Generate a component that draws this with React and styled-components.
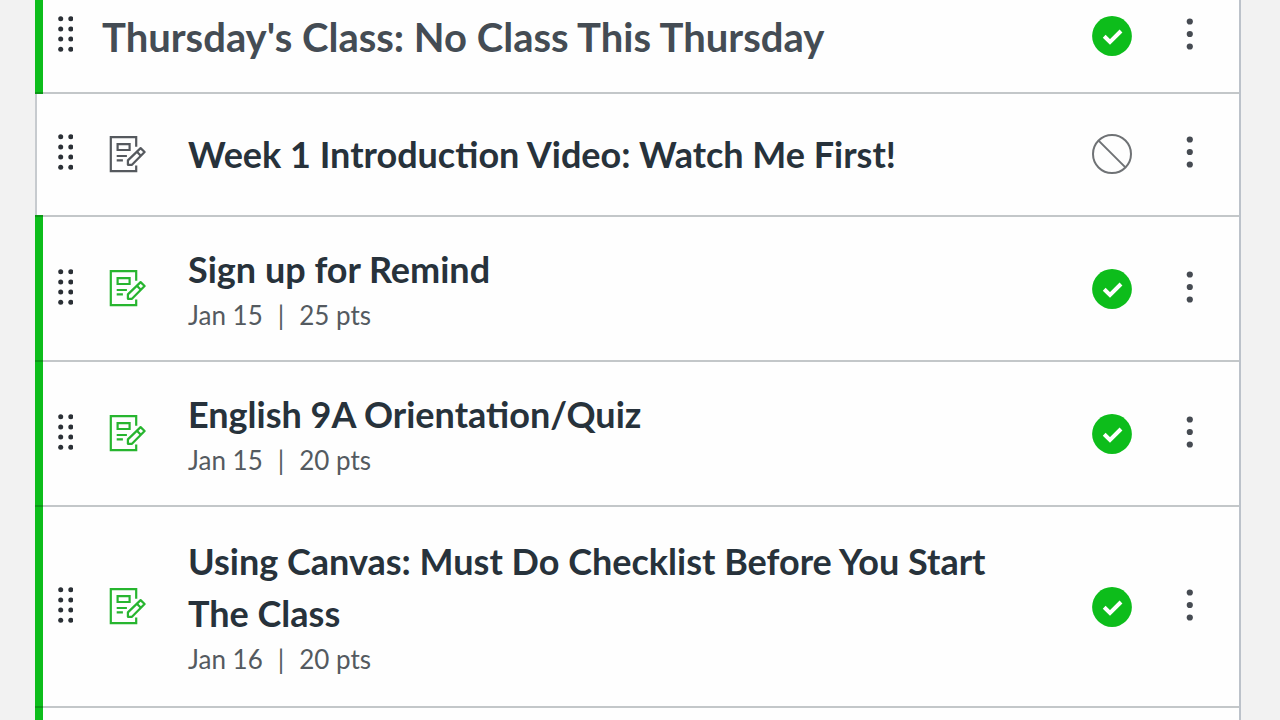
import React from 'react';
import styled, { createGlobalStyle } from 'styled-components';

const GlobalStyle = createGlobalStyle`
  * {
    box-sizing: border-box;
  }

  body {
    margin: 0;
    background: #f2f2f2;
    font-family: Lato, "Liberation Sans", sans-serif;
    overflow: hidden;
  }
`;

const Panel = styled.ul`
  list-style: none;
  margin: 0 39px 0 35px;
  padding: 0;
  background: #fefefe;
  border-left: 2px solid #c7cbcf;
  border-right: 2px solid #bcc2ca;
`;

const rowPadding = {
  header: '9px 45px 29px 21px',
  single: '34px 45px 35px 21px',
  double: '26px 45px 26px 21px',
  tall: '28px 45px 28px 21px',
};

const Row = styled.li`
  position: relative;
  display: flex;
  align-items: center;
  padding: ${({ $size }) => rowPadding[$size || 'double']};
  border-bottom: 2px solid #c3c7c9;

  &::before {
    content: '';
    display: ${({ $published }) => ($published ? 'block' : 'none')};
    position: absolute;
    top: -2px;
    bottom: -2px;
    left: -2px;
    width: 8px;
    background: #0dbd1b;
    border-top: 2px solid #0b9716;
    border-bottom: 2px solid #0b9716;
  }
`;

const IconButton = styled.button`
  display: flex;
  flex: none;
  padding: 0;
  border: none;
  background: none;
  color: ${({ $color }) => $color || '#2b3036'};
  cursor: pointer;
`;

const HandleButton = styled(IconButton)`
  padding-bottom: 4px;
  cursor: move;
`;

const MenuButton = styled(IconButton)`
  margin-left: 54px;
  padding-bottom: 4px;
`;

const TypeIcon = styled.span`
  display: flex;
  flex: none;
  margin-left: 36px;
  color: ${({ $published }) => ($published ? '#27b52f' : '#55595e')};
`;

const Content = styled.div`
  flex: 1;
  min-width: 0;
  margin: 0 60px 0 42px;
`;

const HeaderTitle = styled.h2`
  flex: 1;
  margin: 0 60px 0 29px;
  padding-top: 2px;
  color: #444c54;
  font-size: 40px;
  font-weight: 700;
  line-height: 52px;
`;

const Title = styled.a`
  display: block;
  color: #27323b;
  font-size: 36px;
  font-weight: 700;
  line-height: 52px;
  text-decoration: none;
`;

const Meta = styled.div`
  display: flex;
  margin-top: 1px;
  color: #545a60;
  font-size: 26px;
  line-height: 38px;
`;

const Detail = styled.span`
  & + &::before {
    content: '|';
    margin: 0 15px;
  }
`;

const items = [
  { title: 'Week 1 Introduction Video: Watch Me First!', published: false, size: 'single' },
  { title: 'Sign up for Remind', due: 'Jan 15', points: '25 pts', published: true },
  { title: 'English 9A Orientation/Quiz', due: 'Jan 15', points: '20 pts', published: true },
  {
    title: 'Using Canvas: Must Do Checklist Before You Start The Class',
    due: 'Jan 16',
    points: '20 pts',
    published: true,
    size: 'tall',
  },
];

const DragHandle = () => (
  <HandleButton type="button" aria-label="Move item">
    <svg width="15" height="36" viewBox="0 0 15 36" fill="currentColor">
      {[2.7, 12.8].map((x) =>
        [2.8, 13, 23.1, 33.2].map((y) => <circle key={`${x}-${y}`} cx={x} cy={y} r="2.5" />)
      )}
    </svg>
  </HandleButton>
);

const OptionsMenu = () => (
  <MenuButton type="button" aria-label="Options" $color="#464b52">
    <svg width="8" height="32" viewBox="0 0 8 32" fill="currentColor">
      <circle cx="3.8" cy="3.5" r="3.1" />
      <circle cx="3.8" cy="16" r="3.1" />
      <circle cx="3.8" cy="28.5" r="3.1" />
    </svg>
  </MenuButton>
);

const AssignmentIcon = () => (
  <svg width="37" height="37" viewBox="0 0 37 37" fill="none" stroke="currentColor" strokeWidth="2.2">
    <path d="M27.2 10.8V1.2H1.8v33.9h25.4v-5.7" />
    <path d="M8.6 8.2h12v5.8h-12z" />
    <path d="M7.7 20h10.2M7.7 24.4h6.2" />
    <path d="M18.9 28.8v-4.4L31.6 12.1l4 3.9L23 28.8z" strokeLinejoin="round" />
    <path d="M27.9 15.8l3.9 4" />
  </svg>
);

const PublishButton = ({ published }) => (
  <IconButton
    type="button"
    aria-label={published ? 'Published' : 'Unpublished'}
    $color={published ? '#0dbd1b' : '#6f7275'}
  >
    {published ? (
      <svg width="40" height="40" viewBox="0 0 40 40">
        <circle cx="20" cy="20" r="19.9" fill="currentColor" />
        <path d="M12.2 20.2l5.8 5.7L29 15" fill="none" stroke="#fff" strokeWidth="4" />
      </svg>
    ) : (
      <svg width="40" height="40" viewBox="0 0 40 40" fill="none" stroke="currentColor" strokeWidth="2">
        <circle cx="20" cy="20" r="19" />
        <path d="M6.6 6.6l26.8 26.8" />
      </svg>
    )}
  </IconButton>
);

const ModuleItem = ({ title, due, points, published, size }) => (
  <Row $published={published} $size={size}>
    <DragHandle />
    <TypeIcon $published={published}>
      <AssignmentIcon />
    </TypeIcon>
    <Content>
      <Title href="#">{title}</Title>
      {due && (
        <Meta>
          <Detail>{due}</Detail>
          <Detail>{points}</Detail>
        </Meta>
      )}
    </Content>
    <PublishButton published={published} />
    <OptionsMenu />
  </Row>
);

const App = () => (
  <>
    <GlobalStyle />
    <Panel>
      <Row $published $size="header">
        <DragHandle />
        <HeaderTitle>Thursday's Class: No Class This Thursday</HeaderTitle>
        <PublishButton published />
        <OptionsMenu />
      </Row>
      {items.map((item) => (
        <ModuleItem key={item.title} {...item} />
      ))}
      <Row $published />
    </Panel>
  </>
);

export default App;
